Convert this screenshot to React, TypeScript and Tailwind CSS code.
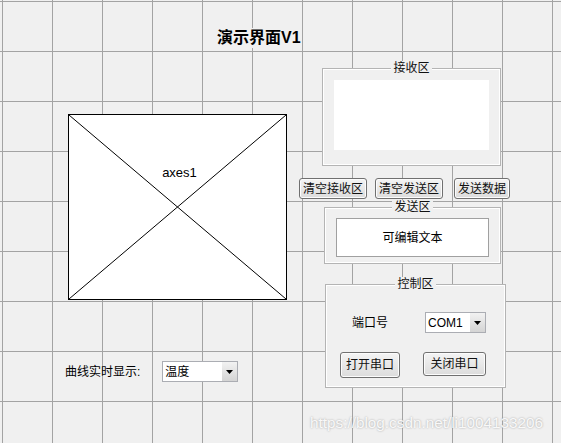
const font = "font-['Liberation_Sans','Noto_Sans_CJK_SC',sans-serif]";

const Button: React.FC<{ label: string; className: string }> = ({ label, className }) => (
	<div
		className={`flex items-center justify-center rounded-[3px] border border-[#707070] bg-[linear-gradient(#f4f4f4,#dcdcdc)] text-[12px] text-[#111] shadow-[inset_0_0_0_1px_#fcfcfc] ${className}`}
	>
		{label}
	</div>
);

// uipanel: titled frame, content flows inside
const Panel: React.FC<{ title: string; className: string; children?: React.ReactNode }> = ({ title, className, children }) => (
	<div className={`absolute border border-[#b4b4b4] bg-[#f0f0f0] shadow-[inset_0_0_0_1px_#fff] ${className}`}>
		<div className="absolute -top-[8px] left-0 right-0 flex justify-center">
			<span className="bg-[#f0f0f0] px-[2px] text-[12px] leading-[14px] text-[#111]">{title}</span>
		</div>
		{children}
	</div>
);

const Popup: React.FC<{ value: string; className: string }> = ({ value, className }) => (
	<div className={`flex border border-[#abadb3] bg-white ${className}`}>
		<div className="flex flex-1 items-center pl-[2px] text-[12px] text-black">{value}</div>
		<div className="flex w-[15px] items-center justify-center bg-[linear-gradient(#f2f2f2,#d4d4d4)]">
			<svg width="7" height="4" viewBox="0 0 7 4">
				<path d="M0 0h7L3.5 4z" fill="#000" />
			</svg>
		</div>
	</div>
);

export default function App() {
	return (
		<div
			className={`relative h-[443px] w-[561px] overflow-hidden bg-[#f0f0f0] bg-[linear-gradient(to_right,#a3a3a3_1px,transparent_1px),linear-gradient(to_bottom,#a3a3a3_1px,transparent_1px)] bg-[size:50px_50px] bg-[position:2px_1px] ${font}`}
		>
			{/* title */}
			<div className="absolute left-[217px] top-[28px] bg-[#f0f0f0] text-[16px] font-bold leading-[20px] text-black">
				演示界面V1
			</div>

			{/* axes */}
			<div className="absolute left-[68px] top-[114px] flex h-[186px] w-[219px] justify-center border-[1.5px] border-black bg-white pt-[48px]">
				<svg className="absolute inset-0 h-full w-full" preserveAspectRatio="none" viewBox="0 0 100 100">
					<path d="M0 0L100 100M100 0L0 100" stroke="#000" strokeWidth="1" vectorEffect="non-scaling-stroke" fill="none" />
				</svg>
				<span className="relative h-fit pl-[4px] text-[13px] text-black">axes1</span>
			</div>

			{/* receive */}
			<Panel title="接收区" className="left-[322px] top-[68px] flex h-[98px] w-[179px] p-[11px] pb-[15px]">
				<div className="flex-1 bg-white" />
			</Panel>

			<div className="absolute left-[299px] top-[178px] flex gap-[8px]">
				<Button label="清空接收区" className="h-[21px] w-[68px]" />
				<Button label="清空发送区" className="h-[21px] w-[68px]" />
				<Button label="发送数据" className="ml-[3px] h-[21px] w-[56px]" />
			</div>

			{/* send */}
			<Panel title="发送区" className="left-[324px] top-[207px] flex h-[57px] w-[177px] px-[11px] pb-[6px] pt-[10px]">
				<div className="flex flex-1 items-center justify-center border border-[#a0a0a0] bg-white text-[12px] text-black">
					可编辑文本
				</div>
			</Panel>

			{/* control */}
			<Panel title="控制区" className="left-[325px] top-[284px] flex h-[104px] w-[181px] flex-col gap-[19px] pl-[14px] pr-[19px] pt-[27px]">
				<div className="flex items-center justify-between pl-[12px]">
					<span className="text-[12px] text-black">端口号</span>
					<Popup value="COM1" className="h-[21px] w-[61px]" />
				</div>
				<div className="flex items-start justify-between">
					<Button label="打开串口" className="h-[26px] w-[60px]" />
					<Button label="关闭串口" className="h-[24px] w-[63px]" />
				</div>
			</Panel>

			{/* bottom left */}
			<div className="absolute left-[65px] top-[361px] flex items-center gap-[22px]">
				<span className="text-[12px] text-black">曲线实时显示:</span>
				<Popup value="温度" className="h-[21px] w-[76px]" />
			</div>

			{/* watermark */}
			<span className="absolute left-[310px] top-[412px] text-[15.3px] text-white/90 [text-shadow:0_0_2px_#9a9a9a]">
				https://blog.csdn.net/li1004133206
			</span>
		</div>
	);
}
